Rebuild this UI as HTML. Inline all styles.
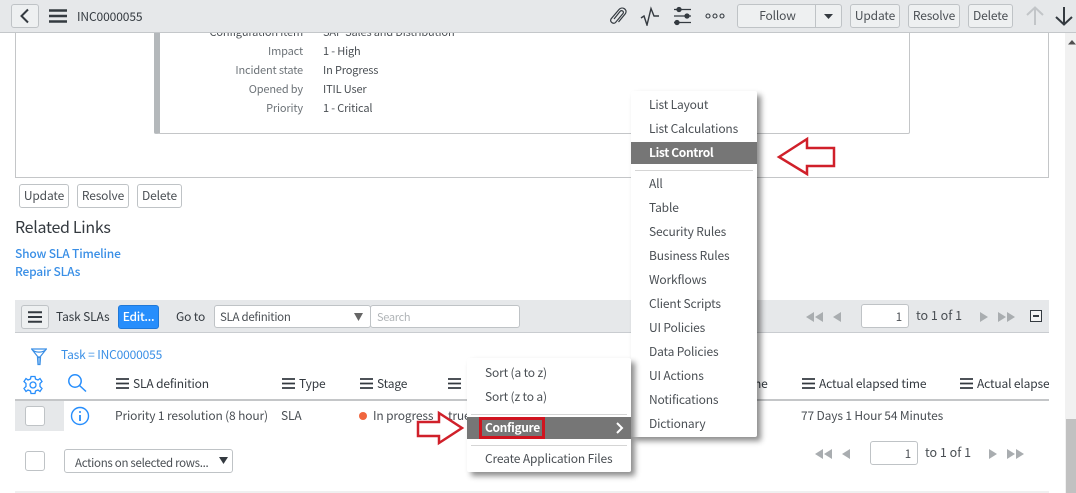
<!DOCTYPE html>
<html><head><meta charset="utf-8"><style>
html,body{margin:0;padding:0;background:#fff}
#p{position:relative;width:1076px;height:493px;overflow:hidden;background:#fff;font-family:"Noto Sans CJK JP","Liberation Sans",sans-serif;font-size:12px;letter-spacing:-.15px;color:#4a4f54}
#p div,#p svg{position:absolute}
.t{white-space:nowrap;line-height:18px;height:18px;margin-top:1px}
.f{font-size:11px;margin-top:0}
.r{text-align:right}
.b{box-sizing:border-box;border:1px solid #bfc3c6;border-radius:3px;background:#fff;text-align:center;line-height:21px;color:#4a4f54;white-space:nowrap}
.g{background:#eef0f1}
.h{color:#343a40}
.l{color:#3a8fe6}
.m{background:#fff;box-shadow:4px 4px 6px rgba(0,0,0,.45);border-radius:2px}
.s{height:1px;background:#d5d5d5}
.w{color:#fff;font-weight:700;letter-spacing:-.35px}
.n{font-size:12.500px;letter-spacing:0}
</style></head><body><div id="p">

<!-- form -->
<div style="left:15px;top:20px;width:1032px;height:157px;border:1px solid #c4c6c8;border-top:0"></div>
<div style="left:154px;top:20px;width:749px;height:112px;border:1px solid #c4c6c8;border-left:6px solid #b4b8bb;border-radius:2px"></div>
<div class="t r f" style="left:160px;top:23px;width:143px">Configuration item</div>
<div class="t f" style="left:323px;top:23px">SAP Sales and Distribution</div>
<div class="t r f" style="left:160px;top:42px;width:143px;color:#6d7378">Impact</div><div class="t f" style="left:323px;top:42px">1 - High</div>
<div class="t r f" style="left:160px;top:61px;width:143px;color:#6d7378">Incident state</div><div class="t f" style="left:323px;top:61px">In Progress</div>
<div class="t r f" style="left:160px;top:80px;width:143px;color:#6d7378">Opened by</div><div class="t f" style="left:323px;top:80px">ITIL User</div>
<div class="t r f" style="left:160px;top:99px;width:143px;color:#6d7378">Priority</div><div class="t f" style="left:323px;top:99px">1 - Critical</div>

<!-- topbar -->
<div style="left:0;top:0;width:1076px;height:32px;background:#e6e8ea;border-bottom:1px solid #c4c7ca"></div>
<div class="b g" style="left:11px;top:4px;width:28px;height:24px"></div>
<svg style="left:11px;top:4px" width="28" height="24"><path d="M17 5.500 L10.500 12 L17 18.500" fill="none" stroke="#343a40" stroke-width="2"/></svg>
<svg style="left:48px;top:8px" width="20" height="16"><path d="M1 2.500H19M1 8H19M1 13.500H19" stroke="#343a40" stroke-width="2.600"/></svg>
<div class="t h" style="left:77px;top:7px;letter-spacing:-.1px">INC0000055</div>

<svg style="left:607px;top:4px" width="22" height="24" fill="none" stroke="#343a40" stroke-width="1.200"><path d="M7 15 L13 7.500 C14.500 5.500 17.500 7.500 16 9.500 L8.500 18.500 C6.500 20.500 2.500 18 4 15 L12 5.500 C15 2 21 5.500 18.500 9.500 L11.500 18"/></svg>
<svg style="left:640px;top:6px" width="21" height="20" fill="none" stroke="#343a40" stroke-width="1.400"><path d="M1 12 L4 10 L7 19 L11 2.500 L14 10 L19 10"/></svg>
<svg style="left:673px;top:6px" width="20" height="20" stroke="#343a40" stroke-width="1.300"><path d="M1 3.500H18M1 10H18M1 16.500H18"/><circle cx="6" cy="3.500" r="2" fill="#343a40"/><circle cx="14" cy="10" r="2" fill="#343a40"/><circle cx="4" cy="16.500" r="2" fill="#343a40"/></svg>
<svg style="left:705px;top:11px" width="20" height="10" fill="none" stroke="#343a40" stroke-width="1.100"><circle cx="3" cy="5" r="2"/><circle cx="10" cy="5" r="2"/><circle cx="17" cy="5" r="2"/></svg>

<div class="b g" style="left:737px;top:4px;width:79px;height:24px;border-radius:3px 0 0 3px;line-height:22px;padding-left:2px">Follow</div>
<div class="b g" style="left:815px;top:4px;width:27px;height:24px;border-radius:0 3px 3px 0"></div>
<svg style="left:824px;top:14px" width="10" height="6"><path d="M0 0H9L4.500 5Z" fill="#343a40"/></svg>
<div class="b g" style="left:850px;top:4px;width:50px;height:24px">Update</div>
<div class="b g" style="left:908px;top:4px;width:52px;height:24px">Resolve</div>
<div class="b g" style="left:968px;top:4px;width:45px;height:24px">Delete</div>
<svg style="left:1025px;top:5px" width="20" height="22" fill="none" stroke="#c2c5c8" stroke-width="2"><path d="M10 20V3M2 10L10 2.500L18 10"/></svg>
<svg style="left:1054px;top:5px" width="20" height="22" fill="none" stroke="#343a40" stroke-width="2"><path d="M10 2V19M2 12L10 19.500L18 12"/></svg>

<!-- scrollbar -->
<div style="left:1065px;top:33px;width:11px;height:460px;background:#f1f1f1"></div>
<div style="left:1066px;top:419px;width:10px;height:74px;background:#c1c1c1"></div>
<svg style="left:1068px;top:40px" width="8" height="5"><path d="M0 4.500L4 0L8 4.500Z" fill="#505050"/></svg>

<!-- form buttons -->
<div class="b" style="left:19px;top:184px;width:50px;height:24px">Update</div>
<div class="b" style="left:77px;top:184px;width:52px;height:24px">Resolve</div>
<div class="b" style="left:137px;top:184px;width:45px;height:24px">Delete</div>

<div class="t h" style="left:15px;top:214px;font-size:16px;letter-spacing:-.3px;line-height:22px;height:22px">Related Links</div>
<div class="t l" style="left:15px;top:244px;font-weight:500;letter-spacing:-.2px">Show SLA Timeline</div>
<div class="t l" style="left:15px;top:262px;font-weight:500;letter-spacing:-.2px">Repair SLAs</div>

<!-- list header -->
<div style="left:15px;top:300px;width:1034px;height:33px;background:#e6e8ea;border-bottom:1px solid #c9ccd0;box-sizing:border-box"></div>
<div class="b g" style="left:21px;top:305px;width:28px;height:24px"></div>
<svg style="left:28px;top:311px" width="14" height="12"><path d="M0 1.200H14M0 6H14M0 10.800H14" stroke="#343a40" stroke-width="2"/></svg>
<div class="t h" style="left:56px;top:307px">Task SLAs</div>
<div style="left:118px;top:305px;width:41px;height:24px;background:#278efc;border:1px solid #1f78d8;box-sizing:border-box;border-radius:3px;color:#fff;text-align:center;line-height:21px;font-weight:500;letter-spacing:-.3px">Edit...</div>
<div class="t h" style="left:176px;top:307px">Go to</div>
<div class="b" style="left:214px;top:305px;width:157px;height:23px;text-align:left;padding-left:5px;font-size:11.500px;letter-spacing:-.3px;line-height:23px">SLA definition</div>
<svg style="left:354px;top:313px" width="9" height="8"><path d="M0 0H9L4.500 8Z" fill="#666"/></svg>
<div class="b" style="left:370px;top:305px;width:150px;height:23px;text-align:left;padding-left:6px;font-size:11px;letter-spacing:-.3px;line-height:23px;color:#b0b4b7">Search</div>

<svg style="left:805px;top:311px" width="40" height="12" fill="#a9adb0"><path d="M9 1V11L1 6ZM18 1V11L10 6ZM36 1V11L28 6Z"/></svg>
<div class="b" style="left:861px;top:304px;width:48px;height:24px;text-align:right;padding-right:6px;line-height:25px;font-size:11.500px">1</div>
<div class="t n" style="left:916px;top:305px">to 1 of 1</div>
<svg style="left:979px;top:311px" width="44" height="12" fill="#a9adb0"><path d="M1 1V11L9 6ZM19 1V11L27 6ZM28 1V11L36 6Z"/></svg>
<div style="left:1030px;top:310px;width:12px;height:12px;border:1px solid #343a40;box-sizing:border-box;background:#f3f3f3"></div>
<div style="left:1033px;top:315px;width:6px;height:1.500px;background:#343a40"></div>

<!-- filter -->
<svg style="left:29px;top:347px" width="20" height="20" fill="none" stroke="#3a8fe6" stroke-width="1.200"><path d="M2 2H18M3 2.500L9 10H11L17 2.500M3 2.500C6 6 14 6 17 2.500"/><path d="M8.500 10.500H11.500L11 17.500H9Z" fill="#3a8fe6" fill-opacity=".5"/></svg>
<div class="t l" style="left:61px;top:345px">Task = INC0000055</div>

<!-- column headers -->
<svg style="left:23px;top:375px" width="20" height="20" fill="none" stroke="#278efc" stroke-width="1.300"><path d="M8 1.500H12L12.500 4L15 5L17 3.500L19 6.500L17 8.500V11.500L19 13.500L17 16.500L15 15L12.500 16L12 18.500H8L7.500 16L5 15L3 16.500L1 13.500L3 11.500V8.500L1 6.500L3 3.500L5 5L7.500 4Z"/><circle cx="10" cy="10" r="3"/></svg>
<svg style="left:67px;top:373px" width="20" height="20" fill="none" stroke="#278efc" stroke-width="1.500"><circle cx="8" cy="8" r="6.200"/><path d="M12.500 12.500L19 18.500"/></svg>
<svg style="left:116px;top:378px" width="14" height="11"><path d="M0 1H13M0 5.500H13M0 10H13" stroke="#343a40" stroke-width="1.700"/></svg>
<div class="t h" style="left:133px;top:374px">SLA definition</div>
<svg style="left:282px;top:378px" width="14" height="11"><path d="M0 1H13M0 5.500H13M0 10H13" stroke="#343a40" stroke-width="1.700"/></svg>
<div class="t h" style="left:299px;top:374px">Type</div>
<svg style="left:360px;top:378px" width="14" height="11"><path d="M0 1H13M0 5.500H13M0 10H13" stroke="#343a40" stroke-width="1.700"/></svg>
<div class="t h" style="left:377px;top:374px">Stage</div>
<svg style="left:448px;top:378px" width="14" height="11"><path d="M0 1H13M0 5.500H13M0 10H13" stroke="#343a40" stroke-width="1.700"/></svg>
<svg style="left:802px;top:378px" width="14" height="11"><path d="M0 1H13M0 5.500H13M0 10H13" stroke="#343a40" stroke-width="1.700"/></svg>
<div class="t h" style="left:819px;top:374px">Actual elapsed time</div>
<svg style="left:960px;top:378px" width="14" height="11"><path d="M0 1H13M0 5.500H13M0 10H13" stroke="#343a40" stroke-width="1.700"/></svg>
<div style="left:977px;top:375px;width:72px;height:18px;overflow:hidden;white-space:nowrap;line-height:18px;color:#343a40">Actual elapsed percentage</div>
<div class="t h" style="left:754px;top:374px">ne</div>
<div style="left:15px;top:399px;width:1034px;height:2px;background:#c4c6c8"></div>

<!-- row -->
<div style="left:15px;top:401px;width:49px;height:30px;background:#e6e8ea"></div>
<div class="b" style="left:25px;top:406px;width:20px;height:20px"></div>
<svg style="left:70px;top:406px" width="20" height="20" fill="none" stroke="#278efc" stroke-width="1.400"><circle cx="10" cy="10" r="8.500"/><path d="M10 9V15" stroke-width="1.800"/><circle cx="10" cy="6" r="1" fill="#278efc" stroke="none"/></svg>
<div class="t" style="left:115px;top:406px">Priority 1 resolution (8 hour)</div>
<div class="t" style="left:281px;top:406px">SLA</div>
<div style="left:359px;top:412px;width:8px;height:8px;border-radius:50%;background:#f0663e"></div>
<div class="t" style="left:373px;top:406px">In progress</div>
<div class="t" style="left:448px;top:406px">true</div>
<div class="t" style="left:801px;top:406px">77 Days 1 Hour 54 Minutes</div>

<div class="b" style="left:25px;top:451px;width:20px;height:20px"></div>
<div class="b" style="left:64px;top:449px;width:169px;height:24px;text-align:left;padding-left:10px;font-size:11.500px;letter-spacing:-.3px;line-height:27px">Actions on selected rows...</div>
<svg style="left:219px;top:457px" width="9" height="8"><path d="M0 0H9L4.500 7Z" fill="#343a40"/></svg>

<svg style="left:814px;top:448px" width="40" height="12" fill="#a9adb0"><path d="M9 1V11L1 6ZM18 1V11L10 6ZM36 1V11L28 6Z"/></svg>
<div class="b" style="left:870px;top:441px;width:48px;height:24px;text-align:right;padding-right:6px;line-height:25px;font-size:11.500px">1</div>
<div class="t n" style="left:925px;top:442px">to 1 of 1</div>
<svg style="left:988px;top:448px" width="44" height="12" fill="#a9adb0"><path d="M1 1V11L9 6ZM19 1V11L27 6ZM28 1V11L36 6Z"/></svg>
<div style="left:15px;top:491px;width:1034px;height:2px;background:#f0f0f0"></div>

<!-- menu 1 -->
<div class="m" style="left:631px;top:91px;width:126px;height:346px"></div>
<div style="left:631px;top:142px;width:126px;height:22px;background:#767676"></div>
<div class="s" style="left:635px;top:170px;width:118px"></div>
<div class="t" style="left:649px;top:95px">List Layout</div>
<div class="t" style="left:649px;top:119px">List Calculations</div>
<div class="t w" style="left:649px;top:143px">List Control</div>
<div class="t" style="left:649px;top:174px">All</div>
<div class="t" style="left:649px;top:198px">Table</div>
<div class="t" style="left:649px;top:222px">Security Rules</div>
<div class="t" style="left:649px;top:246px">Business Rules</div>
<div class="t" style="left:649px;top:270px">Workflows</div>
<div class="t" style="left:649px;top:294px">Client Scripts</div>
<div class="t" style="left:649px;top:318px">UI Policies</div>
<div class="t" style="left:649px;top:342px">Data Policies</div>
<div class="t" style="left:649px;top:366px">UI Actions</div>
<div class="t" style="left:649px;top:390px">Notifications</div>
<div class="t" style="left:649px;top:414px">Dictionary</div>

<!-- menu 2 -->
<div class="m" style="left:467px;top:358px;width:164px;height:114px"></div>
<div class="s" style="left:471px;top:414px;width:156px"></div>
<div style="left:467px;top:417px;width:164px;height:22px;background:#767676"></div>
<div class="s" style="left:471px;top:445px;width:156px"></div>
<div class="t" style="left:485px;top:363px">Sort (a to z)</div>
<div class="t" style="left:485px;top:387px">Sort (z to a)</div>
<div class="t w" style="left:485px;top:418px">Configure</div>
<svg style="left:615px;top:422px" width="10" height="12" fill="none" stroke="#fff" stroke-width="2"><path d="M2 1L7 6L2 11"/></svg>
<div class="t" style="left:485px;top:449px">Create Application Files</div>
<div style="left:479px;top:417px;width:66px;height:22px;box-sizing:border-box;border:3px solid #d0141f"></div>

<!-- arrows -->
<svg style="left:0;top:0" width="1076" height="493" fill="#fff" stroke="#d0202a" stroke-width="2.500"><path d="M418 422H439V413L462 428L439 443V436H418Z" fill="none"/><path d="M779 157L807 139V148H834V166H807V174Z"/></svg>

</div></body></html>
